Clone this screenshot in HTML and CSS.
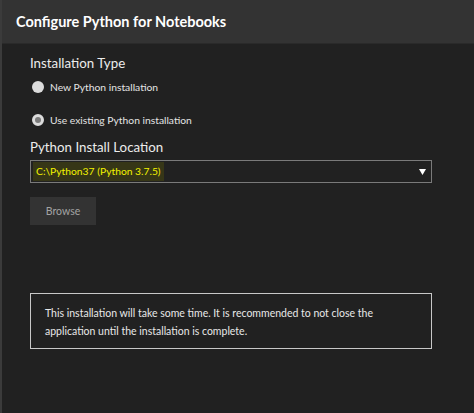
FILE: index.html
```html
<!DOCTYPE html>
<html>
<head>
<meta charset="utf-8">
<link rel="stylesheet" href="styles.css">
</head>
<body>
<div class="dialog">
  <div class="header">Configure Python for Notebooks</div>
  <div class="content">
    <div class="heading">Installation Type</div>
    <div class="radio-row">
      <span class="radio"></span>
      <span class="label">New Python installation</span>
    </div>
    <div class="radio-row second">
      <span class="radio checked"></span>
      <span class="label">Use existing Python installation</span>
    </div>
    <div class="heading location">Python Install Location</div>
    <div class="select">
      <span class="select-text">C:\Python37 (Python 3.7.5)</span>
      <svg class="arrow" width="7" height="6" viewBox="0 0 7 6"><polygon points="0,0 7,0 3.5,6" fill="#ffffff"/></svg>
    </div>
    <div class="browse">Browse</div>
    <div class="info">This installation will take some time. It is recommended to not close the application until the installation is complete.</div>
  </div>
</div>
</body>
</html>
```
FILE: styles.css
```css
html, body {
  margin: 0;
  padding: 0;
  background: #212121;
}
body {
  font-family: Lato, "Open Sans", sans-serif;
  width: 474px;
  height: 413px;
  overflow: hidden;
}
.dialog {
  border-left: 2px solid #3b3b3b;
  height: 413px;
  box-sizing: border-box;
}
.header {
  height: 44px;
  background: #333333;
  color: #ffffff;
  font-size: 14.5px;
  font-weight: 700;
  line-height: 44px;
  padding-left: 14px;
  box-sizing: border-box;
  border-bottom: 1px solid #2a2a2a;
}
.content {
  padding: 9px 42px 0 28px;
}
.heading {
  color: #ececec;
  font-size: 13.3px;
  line-height: 20px;
}
.radio-row {
  display: flex;
  align-items: center;
  height: 20px;
  margin-top: 4px;
  gap: 6px;
  padding-left: 2px;
}
.radio-row.second {
  margin-top: 13px;
}
.radio {
  width: 12px;
  height: 12px;
  border-radius: 50%;
  background: #dcdcdc;
  box-sizing: border-box;
}
.radio.checked {
  background: #7a7a7a;
  border: 3px solid #dcdcdc;
}
.label {
  color: #e4e4e4;
  font-size: 10.3px;
}
.heading.location {
  margin-top: 7px;
}
.select {
  margin-top: 3px;
  height: 23px;
  border: 1px solid #7a7a7a;
  box-sizing: border-box;
  display: flex;
  align-items: center;
  justify-content: space-between;
  padding: 0 5px 0 2px;
}
.select-text {
  color: #f2f200;
  font-size: 10.3px;
  line-height: 19px;
  padding: 0 3px;
  background: rgba(110, 110, 0, 0.28);
}
.arrow {
  display: block;
}
.browse {
  margin-top: 14px;
  width: 66px;
  height: 28px;
  background: #333333;
  color: #a3a3a3;
  font-size: 10.5px;
  line-height: 28px;
  text-align: center;
}
.info {
  margin-top: 68px;
  border: 1px solid #c8c8c8;
  padding: 10px 14px 8px 14px;
  color: #e8e8e8;
  font-size: 10.5px;
  line-height: 18px;
}
```
